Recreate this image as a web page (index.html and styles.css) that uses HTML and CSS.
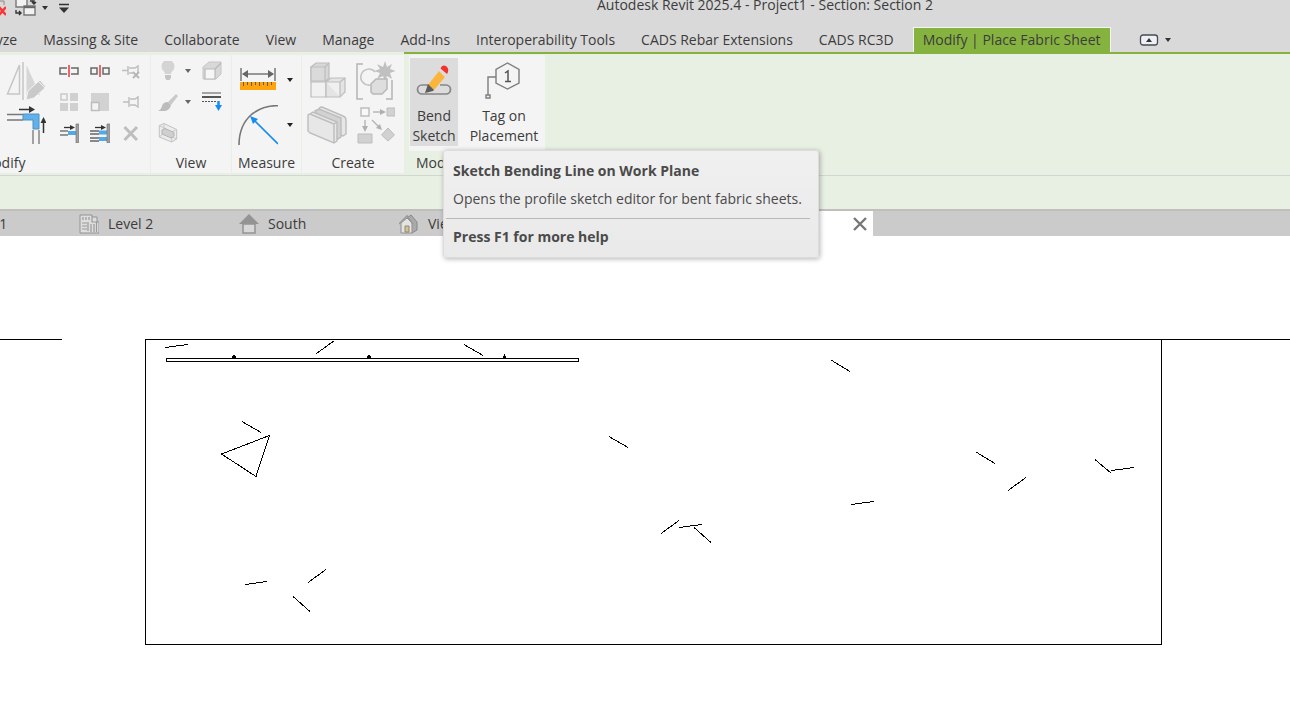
FILE: index.html
```html
<!DOCTYPE html>
<html lang="en">
<head>
	<meta charset="UTF-8">
	<title>Autodesk Revit 2025.4</title>
	<link rel="stylesheet" href="styles.css">
</head>
<body>
	<header class="title_bar">
		<div class="quick_access">
			<button aria-label="Close inactive views"><svg width="12" height="20" viewBox="0 0 12 20"><path d="M0 3H10V7" fill="none" stroke="#888"/><path d="M5 9L12 17M12 9L5 17" stroke="#f33" stroke-width="2.4"/></svg></button>
			<button aria-label="Switch windows"><svg width="22" height="20" viewBox="0 0 22 20"><g fill="#f2f2f2" stroke="#777" stroke-width="1.4"><path d="M1 -3H12V7H1Z"/><path d="M9 6H20V15H9Z"/></g><path d="M9 7.200H20" stroke="#666" stroke-width="2"/><path d="M15 1H19V4M17 2l2 2 2-2M1 10V13H6M4 11l2 2-2 2" fill="none" stroke="#333" stroke-width="1.4"/></svg></button>
			<button class="arrow" aria-label="Window list"><svg width="8" height="6"><path d="M1 1H7L4 5Z" fill="#333"/></svg></button>
			<button class="customize" aria-label="Customize toolbar"><svg width="12" height="11"><path d="M1 1.500H11" stroke="#333" stroke-width="1.500"/><path d="M1 4.500H11L6 10Z" fill="#333"/></svg></button>
		</div>
		<h1>Autodesk Revit 2025.4 - Project1 - Section: Section 2</h1>
	</header>

	<nav class="menu">
		<button>Analyze</button>
		<button>Massing &amp; Site</button>
		<button>Collaborate</button>
		<button>View</button>
		<button>Manage</button>
		<button>Add-Ins</button>
		<button>Interoperability Tools</button>
		<button>CADS Rebar Extensions</button>
		<button>CADS RC3D</button>
		<button class="current">Modify | Place Fabric Sheet</button>
		<button class="minimize" aria-label="Minimize ribbon">
			<svg width="34" height="14" viewBox="0 0 34 14"><rect x="1.500" y="2" width="17" height="10" rx="2.500" fill="#eef0f5" stroke="#454b57" stroke-width="1.300"/><path d="M7 9H13L10 5Z" fill="#333"/><path d="M26 5H32L29 9Z" fill="#333"/></svg>
		</button>
	</nav>

	<div class="ribbon">
		<section class="panel panel_modify">
			<div class="tools">
				<div class="big">
					<button aria-label="Mirror"><svg viewBox="0 0 40 40"><path d="M13.500 4V33H1.500Z" fill="none" stroke="#c6c6c6" stroke-width="1.500"/><path d="M17 1V39" stroke="#c6c6c6" stroke-width="1.500"/><path d="M20.500 4L34 34H20.500Z" fill="#d6d6d6"/><path d="M20 39L22 30 34 19 40 26 28 37Z" fill="#c9c9c9" stroke="#f4f4f4"/><path d="M32 20l7 7" stroke="#f4f4f4"/></svg></button>
					<button aria-label="Trim"><svg viewBox="0 0 40 40"><path d="M17 9H33V24H27V15H17Z" fill="#62b1e8" stroke="#4b93c8"/><path d="M1 9.500H17M1 15H17M27 25V39M33 25V39" stroke="#777" stroke-width="1.300"/><path d="M13 4.500H24M37.500 28V16" stroke="#333" stroke-width="1.500"/><path d="M23 1l6 3.500-6 3.500zM34.500 18l3-6 3 6z" fill="#333"/></svg></button>
				</div>
				<div class="grid3">
					<button aria-label="Split"><svg viewBox="0 0 20 20"><path d="M8 7H1V13H8M12 7H19V13H12" fill="none" stroke="#686868" stroke-width="1.500"/><path d="M10 4V16" stroke="#e8363c" stroke-width="1.500"/></svg></button>
					<button aria-label="Split with gap"><svg viewBox="0 0 20 20"><path d="M1 7H7V13H1ZM13 7H19V13H13Z" fill="none" stroke="#686868" stroke-width="1.500"/><path d="M10 4V16" stroke="#e8363c" stroke-width="1.500"/></svg></button>
					<button aria-label="Unpin"><svg viewBox="0 0 20 20"><path d="M1 9.500H7M7 5V14M8 7H14L17 5V12M8 12H12M17 4V11" fill="none" stroke="#bdbdbd" stroke-width="1.400"/><path d="M12 11l6 6M18 11l-6 6" stroke="#b5b5b5" stroke-width="1.800"/></svg></button>
					<button aria-label="Array"><svg viewBox="0 0 20 20"><path d="M2 2H8V8H2Z" fill="none" stroke="#c9c9c9" stroke-width="1.500"/><path d="M11 1H19V9H11ZM1 11H9V19H1ZM11 11H19V19H11Z" fill="#d0d0d0"/></svg></button>
					<button aria-label="Scale"><svg viewBox="0 0 20 20"><path d="M1 1H19V19H1Z" fill="#d2d2d2"/><path d="M1.500 10.500H9V18.500H1.500Z" fill="#f4f4f4" stroke="#bdbdbd" stroke-width="1.500"/></svg></button>
					<button aria-label="Pin"><svg viewBox="0 0 20 20"><path d="M2 10H8M8 5V15M9 7H14L17 5V15L14 13H9M17 4V16" fill="none" stroke="#bdbdbd" stroke-width="1.400"/></svg></button>
					<button aria-label="Trim single"><svg viewBox="0 0 20 20"><path d="M1 8H9M1 12H9" stroke="#777" stroke-width="1.300"/><path d="M9 8H17V12H9Z" fill="#51a9e5"/><path d="M17 1H20V20H17Z" fill="#a0a0a0" stroke="#777" stroke-width=".700"/><path d="M5 4.500H12" stroke="#333" stroke-width="1.300"/><path d="M11 2l5 2.500-5 2.500z" fill="#333"/></svg></button>
					<button aria-label="Trim multiple"><svg viewBox="0 0 20 20"><path d="M0 8H9M0 11H9M0 15H9M0 18H9" stroke="#666" stroke-width="1.300"/><path d="M9 7.500H17V11.500H9ZM9 14H17V18H9Z" fill="#51a9e5"/><path d="M17 1H20V20H17Z" fill="#a0a0a0" stroke="#777" stroke-width=".700"/><path d="M5 4.500H12" stroke="#333" stroke-width="1.300"/><path d="M11 2l5 2.500-5 2.500z" fill="#333"/></svg></button>
					<button aria-label="Delete"><svg viewBox="0 0 20 20"><path d="M3.500 4L16 17M16 4L3.500 17" stroke="#bebebe" stroke-width="3"/></svg></button>
				</div>
			</div>
			<h2>Modify</h2>
		</section>

		<section class="panel panel_view">
			<div class="tools grid_view">
				<button aria-label="Reveal hidden"><svg viewBox="0 0 20 20"><path d="M7 13Q7 11 5 9.500A6.500 6.500 0 1 1 15 9.500Q13 11 13 13Z" fill="#d4d4d4"/><path d="M7 14H13V17L11.500 19H8.500L7 17Z" fill="#c4c4c4"/></svg></button>
				<button class="arrow" aria-label="Hide options"><svg viewBox="0 0 8 6"><path d="M1 1H7L4 5Z" fill="#666"/></svg></button>
				<button aria-label="Displace"><svg viewBox="0 0 20 20"><path d="M1 6L7 1H19V13L14 18H1Z" fill="#d8d8d8" stroke="#c6c6c6"/><path d="M3 8H13V18H3ZM13 8L19 2" fill="#f6f6f6" stroke="#b9b9b9" stroke-width="1.200"/></svg></button>
				<button aria-label="Override graphics"><svg viewBox="0 0 20 20"><path d="M10 10L18 2 20 4 13 13Z" fill="#c9c9c9"/><path d="M0 19Q3 18 4 14T10 10L13 13Q12 18 7 19Z" fill="#bcbcbc"/></svg></button>
				<button class="arrow" aria-label="Override options"><svg viewBox="0 0 8 6"><path d="M1 1H7L4 5Z" fill="#666"/></svg></button>
				<button aria-label="Linework"><svg viewBox="0 0 20 20"><path d="M0 1H19" stroke="#555"/><path d="M0 5H19" stroke="#555" stroke-width="2"/><path d="M0 9.500H14" stroke="#555" stroke-dasharray="2 1"/><path d="M16.500 9V14" stroke="#168cf0" stroke-width="2.500"/><path d="M13 13H20L16.500 19Z" fill="#168cf0"/></svg></button>
				<button aria-label="Selection box"><svg viewBox="0 0 20 20"><path d="M1.300 2.500L6 .500 18.700 6.500V16L13.700 19 1.300 14Z" fill="#ececec" stroke="#c2c2c2"/><path d="M1.300 2.500L13.700 9V19M13.700 9L18.700 6.500M6 .500V10L1.300 14M6 10L18.700 16" fill="none" stroke="#c8c8c8"/><path d="M4 7L7 5.500 16 9.500V13L13 15 4 11Z" fill="#cfcfcf" stroke="#b4b4b4"/></svg></button>
			</div>
			<h2>View</h2>
		</section>

		<section class="panel panel_measure">
			<div class="tools grid_measure">
				<button aria-label="Aligned dimension"><svg viewBox="0 0 40 40"><path d="M3 8V21M37 8V21M5 14H35" stroke="#777" stroke-width="1.500"/><path d="M4 14l6-4v8zM36 14l-6-4v8z" fill="#666"/><path d="M2 22H38V30H2Z" fill="#fca50f"/><path d="M5.500 22v4M9.500 22v3M13.500 22v4M17.500 22v3M21.500 22v4M25.500 22v3M29.500 22v4M33.500 22v3" stroke="#6a5a3a"/></svg></button>
				<button class="arrow" aria-label="Dimension types"><svg viewBox="0 0 8 6"><path d="M1 1H7L4 5Z" fill="#222"/></svg></button>
				<button aria-label="Radial dimension"><svg viewBox="0 0 40 40"><path d="M1 40Q1 20 14 9 26 0 40 .800" fill="none" stroke="#777" stroke-width="1.600"/><path d="M16 15L40 39" stroke="#168cf0" stroke-width="1.600"/><path d="M12 11l8 3-5 5z" fill="#168cf0"/></svg></button>
				<button class="arrow" aria-label="Radial types"><svg viewBox="0 0 8 6"><path d="M1 1H7L4 5Z" fill="#222"/></svg></button>
			</div>
			<h2>Measure</h2>
		</section>

		<section class="panel panel_create">
			<div class="tools grid_create">
				<button aria-label="Create assembly"><svg viewBox="0 0 40 40"><g stroke="#bdbdbd" stroke-width="1.200"><path d="M4 7L9 3H22V18L19 21H4Z" fill="#d7d7d7"/><path d="M4 7H18V21H4ZM18 7L22 3" fill="#dadada"/><path d="M4 22H19V37H4Z" fill="#f1f1f1"/><path d="M19 22L24 18H38V32L33 37H19Z" fill="#e4e4e4"/><path d="M19 22H33V37M33 22L38 18" fill="#f0f0f0"/></g></svg></button>
				<button aria-label="Create group"><svg viewBox="0 0 40 40"><path d="M8 4H2V39H8M31 39H37V20" fill="none" stroke="#b4b4b4" stroke-width="1.500"/><path d="M15 25A8 8 0 1 1 20 12" fill="none" stroke="#c4c4c4" stroke-width="1.600"/><path d="M30 1L32 7 37 4 35 9 41 11 35 13 37 19 32 16 30 22 28 16 22 19 25 13 19 11 25 9 22 4 28 7Z" fill="#c0c0c0"/><path d="M16 24L21 19H32V29L27 34H18L16 32Z" fill="#dedede" stroke="#b8b8b8" stroke-width="1.500"/></svg></button>
				<button aria-label="Create parts"><svg viewBox="0 0 40 40"><g fill="#e7e7e7" stroke="#bdbdbd" stroke-width="1.400"><path d="M12 5Q12 2 15 2L36 11Q39 12 39 15V29L36 31 12 20Z"/><path d="M8 6L12 4 34 13V32L31 34Z" fill="#d2d2d2"/><path d="M1 11Q1 9 3 9L6 7 30 17V36L27 38 3 28 1 26Z"/><path d="M3 9L27 19V38M27 19L30 17" fill="none"/></g></svg></button>
				<button aria-label="Create similar"><svg viewBox="0 0 40 40"><path d="M6 3H14V11H6Z" fill="#f8f8f8" stroke="#bdbdbd" stroke-width="1.500"/><path d="M32 3H40V11H32ZM3 29H17V38H3ZM33 23L39.500 30 33 36 26.500 30Z" fill="#d1d1d1" stroke="#bdbdbd"/><path d="M18 7H26M10 15V23M17 15L24 22" stroke="#b8b8b8" stroke-width="1.500"/><path d="M25 4l6 3-6 3zM7 21h6l-3 6zM27 25l-6-2 4-4z" fill="#b0b0b0"/></svg></button>
			</div>
			<h2>Create</h2>
		</section>

		<section class="panel panel_mode">
			<button class="labelled hover">
				<svg width="40" height="40" viewBox="0 0 40 40"><path d="M15 25H8A4.500 4.500 0 0 0 8 34H32A4.500 4.500 0 0 0 32 25H26" fill="none" stroke="#858585" stroke-width="1.700"/><path d="M14 25L25 11 31 17 20 30Z" fill="#fbb53c"/><path d="M14 24L20 30 19 31 11 33Z" fill="#5b5b5b"/><path d="M25 10.500L27 8 33 14 31 17Z" fill="#ddd"/><path d="M26.500 8.500Q28 4 32 6 36 9 33 14Z" fill="#f3322d"/></svg>
				Bend<br>Sketch
			</button>
			<button class="labelled tag">
				<svg width="40" height="40" viewBox="0 0 40 40"><path d="M23.500 3L35 9.500V23L23.500 29 12 23V9.500ZM12 17H4V35M2 35H6V38H2Z" fill="none" stroke="#7d7d7d" stroke-width="1.400"/><path d="M21 13L24 11V21.500M21 21.500H27" fill="none" stroke="#555" stroke-width="1.500"/></svg>
				Tag on<br>Placement
			</button>
			<h2>Mode</h2>
		</section>

		<div class="tooltip" role="tooltip">
			<strong>Sketch Bending Line on Work Plane</strong>
			<p>Opens the profile sketch editor for bent fabric sheets.</p>
			<hr>
			<strong>Press F1 for more help</strong>
		</div>
	</div>

	<div class="options_bar"></div>

	<div class="view_tabs">
		<button>Level 1</button>
		<button><svg width="20" height="20" viewBox="0 0 20 20"><path d="M1 1H13V3H18V8H20V19H1Z" fill="#dedede" stroke="#929292"/><path d="M4 3V6M7 3V6M10 3V6M3 9H8M3 12H8M3 15H8M9 8V17M12 10V18M15 10V18M17.500 8V18M13 3V8H18" fill="none" stroke="#999" stroke-width="1.200"/></svg>Level 2</button>
		<button><svg width="20" height="20" viewBox="0 0 20 20"><path d="M10 0L20 10H0Z" fill="#949494"/><path d="M4 10H16V19H4Z" fill="#d8d8d8" stroke="#949494" stroke-width="1.500"/></svg>South</button>
		<button><svg width="20" height="20" viewBox="0 0 20 20"><path d="M8 4L12 1 18 8V16L13 19" fill="#aaa" stroke="#888"/><path d="M2 9L8 4 13 9V19H2Z" fill="#e3e3e3" stroke="#8f8f8f"/><path d="M0 10L8 2 14 10" fill="none" stroke="#999" stroke-width="1.500"/><path d="M6 12H10V18H6Z" fill="#dcc27d" stroke="#888"/></svg>View 1</button>
		<button class="open" aria-label="Close Section 2"><svg width="14" height="14" viewBox="0 0 14 14"><path d="M1 1L13 13M13 1L1 13" stroke="#777" stroke-width="2.400"/></svg></button>
	</div>

	<main class="drawing">
		<svg width="100%" height="100%" fill="none" stroke="#000" shape-rendering="crispEdges">
			<!-- slab outline and level line -->
			<path d="M0 103.500H62M145.500 103.500H1161.500V408.500H145.500Z"/>
			<line x1="1161" y1="103.500" x2="100%" y2="103.500"/>
			<!-- fabric sheet -->
			<path d="M166.500 122.500H578.500V125.500H166.500Z"/>
			<path d="M232 120h4v2h-4zM233 119h2v1h-2zM367 120h4v2h-4zM368 119h2v1h-2zM503 120h3v2h-3zM504 118h1v2h-1z" fill="#000" stroke="none"/>
			<!-- concrete hatch -->
			<path d="M165 111.500L188 108.500M316.500 117.500L334.500 104.500M464 108.500L483 119.500M242 185.500L261 196.500M221.500 218L269.500 199.500 256 240.500ZM609 200.500L628 211.500M831 124L850 135.500M851 268.500L874 265.500M976 216L995 227.500M1008 254.500L1026 241.500M1095 223.500L1111.500 237.500M1111.500 234.500L1134 231.500M661 297.500L679 284.500M679 291.500L702 288.500M694 291.500L711 306.500M245 348.500L267 345.500M308 346.500L326 333.500M293 360.500L310 375.500"/>
		</svg>
	</main>
</body>
</html>
```
FILE: styles.css
```css
* {
	box-sizing: border-box;
	margin: 0;
	padding: 0;
}

body {
	display: flex;
	flex-direction: column;
	height: 100vh;
	overflow: hidden;
	background: #fff;
	color: #3c3c3c;
	font-family: "Open Sans", "Noto Sans", sans-serif;
	font-size: 14px;
	line-height: 20px;
}

button {
	display: flex;
	align-items: center;
	justify-content: center;
	border: 0;
	background: none;
	color: inherit;
	font: inherit;
	white-space: nowrap;
}

svg {
	display: block;
	flex: none;
}

h1,
h2 {
	font-size: 14px;
	font-weight: normal;
	text-align: center;
}

/* title bar */
.title_bar {
	display: flex;
	height: 27px;
	background: #d9d9d9;
}

.title_bar h1 {
	flex: 1;
	padding-right: 6px;
	line-height: 10px;
}

.quick_access {
	display: flex;
	width: 252px;
	height: 16px;
	margin-left: -6px;
}

.quick_access button:nth-child(2) {
	margin-left: 9px;
	align-items: flex-start;
}

.quick_access .arrow {
	width: 16px;
}

.quick_access .customize {
	width: 22px;
}

/* menu */
.menu {
	display: flex;
	height: 27px;
	background: #d9d9d9;
	margin-left: -46px;
	border-bottom: 2px solid #e8efe3;
}

.menu button {
	padding: 0 13px;
}

.menu .current {
	margin: 0 16px 0 6px;
	padding: 0 9px;
	border: 1px solid #f4f4f4;
	border-bottom: 0;
	background: #86b340;
}

.menu .minimize {
	padding: 0 12px;
}

/* ribbon */
.ribbon {
	position: relative;
	display: flex;
	gap: 1px;
	height: 122px;
	padding: 1px 0 2px;
	background: #e8efe3;
	border-bottom: 1px solid #d3d6d3;
}

.ribbon::before {
	content: "";
	position: absolute;
	top: -2px;
	left: 404px;
	right: 0;
	height: 2px;
	background: #86b340;
}

.panel {
	display: flex;
	flex-direction: column;
	background: #f4f4f4;
}

.panel h2 {
	padding-top: 2px;
}

.tools {
	display: flex;
	height: 96px;
}

.tools svg {
	width: 20px;
	height: 20px;
}

.tools .arrow svg {
	width: 8px;
	height: 6px;
}

.panel_modify {
	width: 294px;
	margin-left: -144px;
}

.panel_modify .tools {
	justify-content: flex-end;
	padding-right: 4px;
}

.big {
	display: grid;
	grid-template-rows: 40px 40px;
	row-gap: 4px;
	padding-top: 6px;
	margin-right: 7px;
}

.big svg,
.grid_measure svg,
.grid_create svg {
	width: 40px;
	height: 40px;
}

.grid3 {
	display: grid;
	grid-template-columns: repeat(3, 31px);
	grid-template-rows: repeat(3, 31px);
}

.panel_view {
	width: 80px;
}

.grid_view {
	display: grid;
	grid-template-columns: 24px 16px 32px;
	grid-template-rows: repeat(3, 31px);
	padding: 0 0 0 5px;
}

.panel_measure {
	width: 69px;
}

.grid_measure {
	display: grid;
	grid-template-columns: 40px 16px;
	grid-template-rows: 40px 40px;
	gap: 5px 4px;
	padding: 5px 0 0 6px;
}

.panel_create {
	width: 102px;
}

.grid_create {
	display: grid;
	grid-template-columns: 40px 40px;
	grid-template-rows: 40px 40px;
	gap: 5px 8px;
	padding: 5px 0 0 5px;
}

.panel_mode {
	display: grid;
	grid-template-columns: 54px 81px;
	grid-template-rows: 96px 22px;
	column-gap: 1px;
	margin-left: 4px;
}

.panel_mode h2 {
	grid-column: 1 / 3;
	padding-left: 7px;
	background: #e8efe3;
	text-align: left;
}

.labelled {
	display: block;
	margin: 3px 5px 5px 1px;
	padding-top: 2px;
}

.labelled svg {
	margin: 0 auto 6px;
}

.labelled.tag {
	margin: 3px 1px 5px 0;
}

.hover {
	background: #dcdcdc;
}

.tooltip {
	position: absolute;
	z-index: 2;
	top: 96px;
	left: 443px;
	padding: 10px 8px 10px 2px;
	border: 1px solid #dcdcdc;
	border-radius: 3px;
	background: linear-gradient(#f0f0f0, #e9e9e9);
	box-shadow: 1px 1px 5px rgba(0, 0, 0, .3);
	color: #4a4a4a;
	white-space: nowrap;
}

.tooltip strong,
.tooltip p {
	display: block;
	padding: 0 8px 0 7px;
}

.tooltip p {
	margin-top: 8px;
}

.tooltip hr {
	margin: 9px 0 8px;
	border: 0;
	border-top: 1px solid #b8b8b8;
}

.options_bar {
	height: 33px;
	background: #e8efe3;
}

/* open views */
.view_tabs {
	display: flex;
	height: 27px;
	margin-left: -87px;
	border-top: 2px solid #bfbfbf;
	background: #cbcbcb;
}

.view_tabs button {
	width: 160px;
	padding: 0 6px;
	gap: 9px;
	justify-content: flex-start;
}

.view_tabs button:first-child {
	padding-left: 49px;
}

.view_tabs .open {
	justify-content: flex-end;
	margin-left: 160px;
	background: #fff;
}

.drawing {
	flex: 1;
	min-height: 0;
}
```
